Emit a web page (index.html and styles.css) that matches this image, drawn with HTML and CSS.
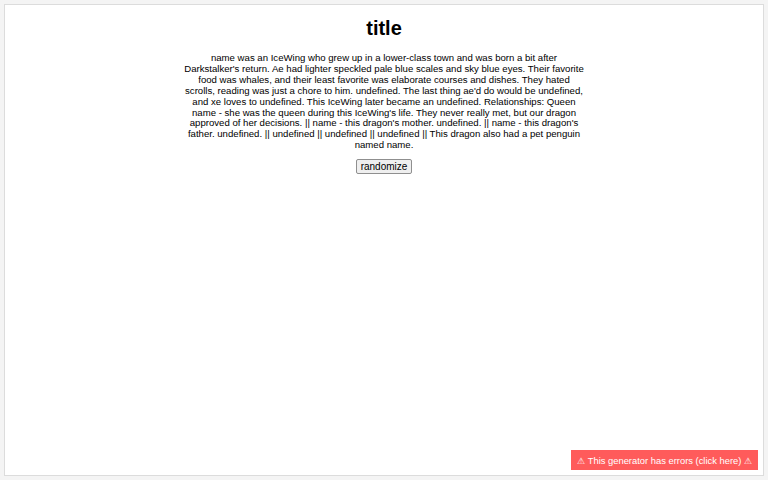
FILE: index.html
```html
<!DOCTYPE html>
<html lang="en">
<head>
    <meta charset="UTF-8">
    <meta name="viewport" content="width=device-width, initial-scale=1.0">
    <title>title</title>
    <link rel="stylesheet" href="styles.css">
</head>
<body>
    <div class="frame">
        <h1>title</h1>
        <p class="output">name was an IceWing who grew up in a lower-class town and was born a bit after Darkstalker's return. Ae had lighter speckled pale blue scales and sky blue eyes. Their favorite food was whales, and their least favorite was elaborate courses and dishes. They hated scrolls, reading was just a chore to him. undefined. The last thing ae'd do would be undefined, and xe loves to undefined. This IceWing later became an undefined. Relationships: Queen name - she was the queen during this IceWing's life. They never really met, but our dragon approved of her decisions. || name - this dragon's mother. undefined. || name - this dragon's father. undefined. || undefined || undefined || undefined || This dragon also had a pet penguin named name.</p>
        <button type="button" class="randomize">randomize</button>
        <a class="error-bar" href="#">&#9888; This generator has errors (click here) &#9888;</a>
    </div>
</body>
</html>
```

FILE: styles.css
```css
html, body {
    height: 100%;
}
body {
    margin: 0;
    padding: 4px;
    box-sizing: border-box;
    background-color: #f4f4f4;
    font-family: "Liberation Sans", Arial, sans-serif;
    color: #000;
}
.frame {
    position: relative;
    height: 100%;
    box-sizing: border-box;
    background-color: #fff;
    border: 1px solid #dcdcdc;
    display: flex;
    flex-direction: column;
    align-items: center;
}
h1 {
    font-size: 20px;
    font-weight: bold;
    margin: 12px 0 13px;
}
.output {
    max-width: 400px;
    margin: 0;
    font-size: 9.6px;
    line-height: 10.9px;
    text-align: center;
}
.randomize {
    margin-top: 8px;
    font-family: "Liberation Sans", Arial, sans-serif;
    font-size: 10px;
    padding: 1px 4px;
    background-color: #efefef;
    border: 1px solid #8f8f8f;
    border-radius: 2px;
    color: #000;
}
.error-bar {
    position: absolute;
    right: 5px;
    bottom: 5px;
    background-color: #ff5b5b;
    color: #fff;
    font-size: 9.4px;
    text-decoration: none;
    padding: 5px 6px 4px;
}
```
